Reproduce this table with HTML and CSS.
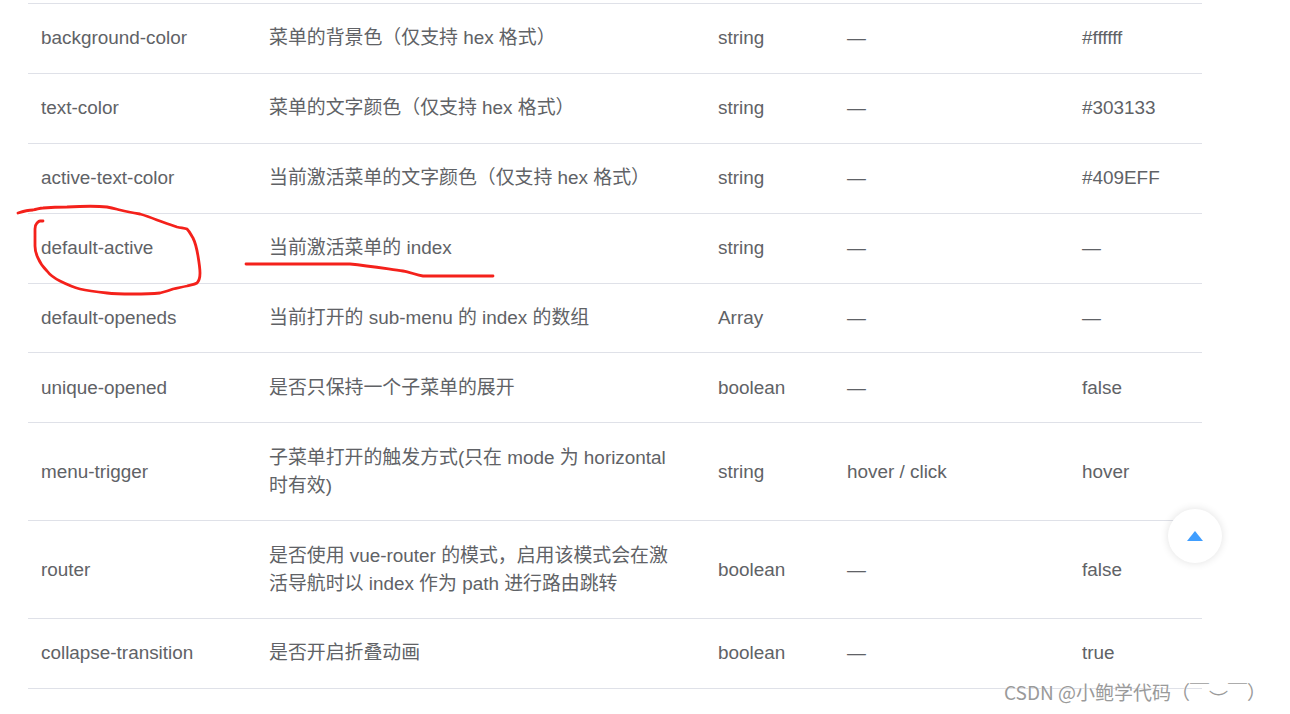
FILE: index.html
```html
<!DOCTYPE html>
<html lang="zh-CN">
<head>
<meta charset="utf-8">
<title>Menu Attributes</title>
<link rel="stylesheet" href="styles.css">
</head>
<body>
<div class="page">
  <table class="attr-table">
    <colgroup>
      <col class="c-name"><col class="c-desc"><col class="c-type"><col class="c-opt"><col class="c-def">
    </colgroup>
    <tbody>
      <tr><td>background-color</td><td>菜单的背景色（仅支持 hex 格式）</td><td>string</td><td>—</td><td>#ffffff</td></tr>
      <tr><td>text-color</td><td>菜单的文字颜色（仅支持 hex 格式）</td><td>string</td><td>—</td><td>#303133</td></tr>
      <tr><td>active-text-color</td><td>当前激活菜单的文字颜色（仅支持 hex 格式）</td><td>string</td><td>—</td><td>#409EFF</td></tr>
      <tr><td>default-active</td><td>当前激活菜单的 index</td><td>string</td><td>—</td><td>—</td></tr>
      <tr><td>default-openeds</td><td>当前打开的 sub-menu 的 index 的数组</td><td>Array</td><td>—</td><td>—</td></tr>
      <tr><td>unique-opened</td><td>是否只保持一个子菜单的展开</td><td>boolean</td><td>—</td><td>false</td></tr>
      <tr><td>menu-trigger</td><td>子菜单打开的触发方式(只在 mode 为 horizontal 时有效)</td><td>string</td><td>hover / click</td><td>hover</td></tr>
      <tr><td>router</td><td>是否使用 vue-router 的模式，启用该模式会在激活导航时以 index 作为 path 进行路由跳转</td><td>boolean</td><td>—</td><td>false</td></tr>
      <tr><td>collapse-transition</td><td>是否开启折叠动画</td><td>boolean</td><td>—</td><td>true</td></tr>
    </tbody>
  </table>

  <svg class="marks" width="1290" height="714" viewBox="0 0 1290 714" aria-hidden="true">
    <path d="M18 213 C24 211 30 210 33 210 C38 209 40 208 43 208 C55 207 62 207 67 207 C85 206 98 206 107 207 C113 208 116 209 120 210 C128 212 134 213 140 214 C147 216 152 218 157 220 C165 223 171 225 177 227 C182 228 185 228 187 229 C190 232 191 235 193 238 C196 244 197 250 198 256 C199 262 200 268 200 273 C200 278 199 281 197 283 C194 285 190 285 187 286 C182 287 178 288 173 289 C168 291 164 292 160 293 C150 294 142 294 133 294 C124 294 115 294 107 293 C97 292 88 291 80 289 C72 287 66 284 60 281 C54 278 50 275 47 271 C43 267 40 263 38 258 C36 254 35 250 35 246 C35 240 35 234 35 229 C35 226 36 224 37 223 C38 222 39 221 40 221 L43 221" />
    <path d="M246 264 L300 264 L350 264 C370 266 388 269 403 271 C410 272 416 275 423 276 L493 276" />
  </svg>

  <button class="backtop" type="button" aria-label="回到顶部">
    <svg width="18" height="12" viewBox="0 0 18 12"><path d="M9 1 L17 11 L1 11 Z" /></svg>
  </button>

  <div class="watermark">CSDN @小鲍学代码（￣<span class="smile">︶</span>￣）</div>
</div>
</body>
</html>
```

FILE: styles.css
```css
html, body {
  margin: 0;
  padding: 0;
  background: #ffffff;
}

.page {
  position: relative;
  width: 1290px;
  height: 714px;
  overflow: hidden;
  padding-top: 3px;
  box-sizing: border-box;
}

.attr-table {
  margin-left: 28px;
  width: 1174px;
  table-layout: fixed;
  border-collapse: collapse;
  font-family: "Liberation Sans", Arial, "Noto Sans CJK SC", sans-serif;
  font-size: 18.9px;
  line-height: 28px;
  color: #606266;
}

.c-name { width: 221px; }
.c-desc { width: 449px; }
.c-type { width: 129px; }
.c-opt  { width: 235px; }
.c-def  { width: 140px; }

.attr-table tr {
  border-top: 1px solid #dfe1e8;
  border-bottom: 1px solid #dfe1e8;
}

.attr-table td {
  padding: 20.45px 20px;
  vertical-align: middle;
  text-align: left;
}

.attr-table td:first-child {
  padding-left: 13px;
}

.marks {
  position: absolute;
  left: 0;
  top: 0;
  pointer-events: none;
}

.marks path {
  fill: none;
  stroke: #f4211b;
  stroke-width: 2.8;
  stroke-linecap: round;
  stroke-linejoin: round;
}

.backtop {
  position: absolute;
  left: 1168px;
  top: 509px;
  width: 54px;
  height: 54px;
  border: none;
  padding: 0;
  border-radius: 50%;
  background: #ffffff;
  box-shadow: 0 0 8px rgba(0, 0, 0, 0.12);
  display: flex;
  align-items: center;
  justify-content: center;
}

.backtop svg path {
  fill: #409eff;
}

.watermark {
  position: absolute;
  right: 24px;
  top: 682px;
  font-family: "Noto Sans CJK SC", sans-serif;
  font-size: 19px;
  line-height: 20px;
  color: #9a9a9a;
  text-shadow: 0 0 1px #ffffff, 0 0 1px #ffffff;
  white-space: nowrap;
}

.watermark .smile {
  vertical-align: -7px;
}
```
